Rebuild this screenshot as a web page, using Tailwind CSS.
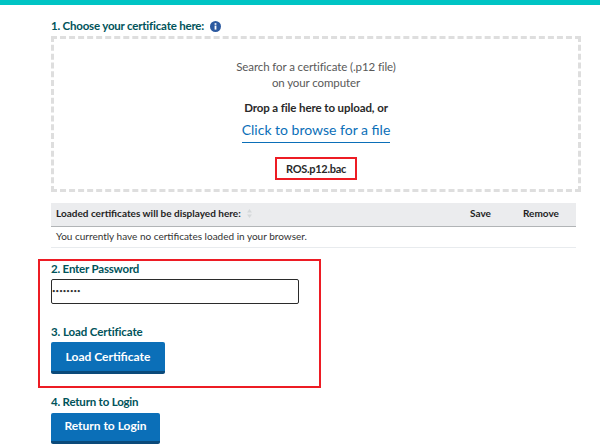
<!DOCTYPE html>
<html>

<head>
  <meta charset="utf-8" />
  <title>Load Certificate</title>
  <script src="https://cdn.jsdelivr.net/npm/@tailwindcss/browser@4"></script>
</head>

<body>
  <main class="h-[444px] w-[600px] overflow-hidden bg-white font-['Lato',sans-serif]">
    <div class="h-[5px] bg-[#00c4c4]"></div>

    <div class="pl-[51px]">
      <div class="mt-[12px] flex h-[17px] items-center gap-[6px]">
        <h3 class="text-[11.5px] font-bold leading-[17px] tracking-[-0.2px] text-[#00535a]">1. Choose your certificate here:</h3>
        <svg class="mt-[1px] h-[11px] w-[11px]" viewBox="0 0 11 11">
          <circle cx="5.5" cy="5.5" r="5.5" fill="#2c5aa0" />
          <rect x="4.6" y="4.6" width="1.8" height="4" fill="#fff" />
          <rect x="4.6" y="2.2" width="1.8" height="1.6" fill="#fff" />
        </svg>
      </div>

      <div class="mt-[2px] flex h-[156px] w-[530px] flex-col items-center border-[3px] border-dashed border-[#dedede] text-center">
        <p class="mt-[20px] text-[11.5px] leading-[16px] tracking-[-0.1px] text-[#595959]">Search for a certificate (.p12 file)<br />on your computer</p>
        <p class="mt-[9px] text-[11.5px] font-bold leading-[16px] tracking-[-0.1px] text-[#292929]">Drop a file here to upload, or</p>
        <a class="mt-[3px] border-b border-[#0b6fb8] pb-[2px] text-[14px] leading-[21px] text-[#0b6fb8]">Click to browse for a file</a>
        <div class="mt-[14px] border-[2px] border-[#ed1c24] px-[9px] text-[11px] font-bold leading-[19px] tracking-[-0.3px] text-[#292929]">ROS.p12.bac</div>
      </div>

      <table class="mt-[11px] w-[525px] table-fixed text-[10px]">
        <thead>
          <tr class="h-[23px] border-b border-[#b1b4b6] bg-[#ebecee] text-[#1f1f1f]">
            <th class="pb-[2px] pl-[5px] text-left font-bold">
              <span class="flex items-center gap-[6px]">Loaded certificates will be displayed here:
                <svg class="h-[9px] w-[5px]" viewBox="0 0 5 9" fill="#d5d8da">
                  <path d="M2.5 0 5 3.5H0z" />
                  <path d="M2.5 9 5 5.5H0z" />
                </svg>
              </span>
            </th>
            <th class="w-[53px] pb-[2px] pl-[6px] text-left font-bold">Save</th>
            <th class="w-[59px] pb-[2px] pl-[6px] text-left font-bold">Remove</th>
          </tr>
        </thead>
        <tbody>
          <tr class="h-[21px] border-b border-[#e8ebee]">
            <td colspan="3" class="pl-[5px] text-[#333]">You currently have no certificates loaded in your browser.</td>
          </tr>
        </tbody>
      </table>
    </div>

    <div class="mt-[11px] ml-[38px] h-[129px] w-[283px] border-[2px] border-[#ed1c24] pl-[11px]">
      <h3 class="text-[11.5px] font-bold leading-[16px] tracking-[-0.2px] text-[#00535a]">2. Enter Password</h3>
      <div class="mt-[2px] flex h-[25px] w-[248px] items-center rounded-[2px] border-[1.5px] border-[#2b2b2b] text-[6px] leading-none tracking-[0.1px] text-[#333]">••••••••</div>
      <h3 class="mt-[20px] text-[11.5px] font-bold leading-[16px] tracking-[-0.1px] text-[#00535a]">3. Load Certificate</h3>
      <button class="mt-[2px] block h-[32px] w-[114px] rounded-[2px] border-b-[3px] border-[#0b4a7a] bg-[#0b6fb8] pt-[2px] text-[12px] font-bold text-white">Load Certificate</button>
    </div>

    <div class="pl-[51px]">
      <h3 class="mt-[6px] text-[11.5px] font-bold leading-[16px] tracking-[-0.2px] text-[#00535a]">4. Return to Login</h3>
      <button class="mt-[3px] block h-[31px] w-[109px] rounded-[2px] border-b-[3px] border-[#0b4a7a] bg-[#0b6fb8] pb-[2px] text-[12px] font-bold text-white">Return to Login</button>
    </div>
  </main>
</body>

</html>
